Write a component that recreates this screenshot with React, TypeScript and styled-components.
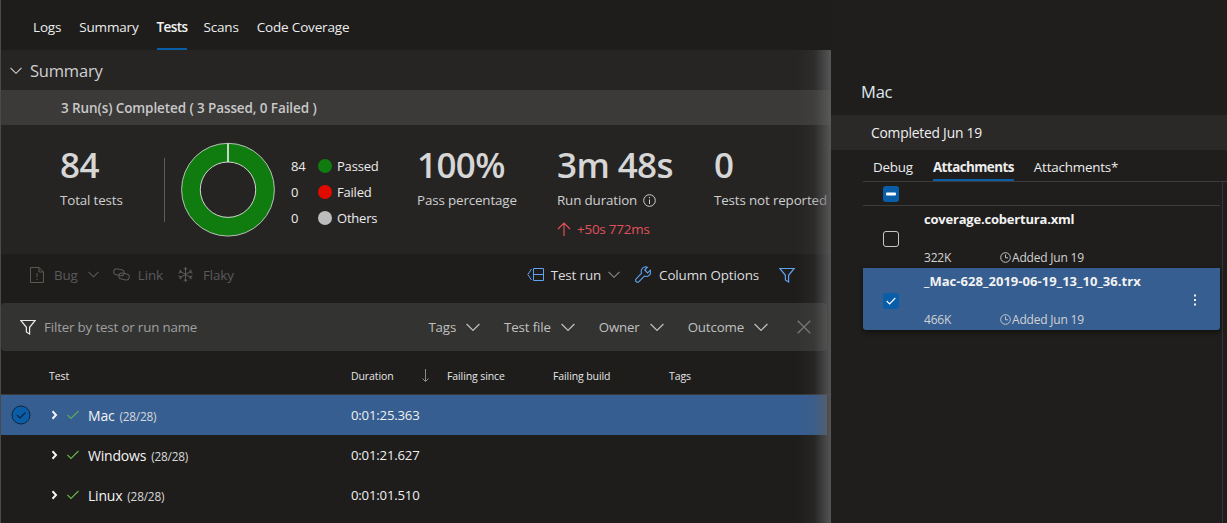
import React from 'react';
import styled, { createGlobalStyle } from 'styled-components';

const Global = createGlobalStyle`
  html, body {
    margin: 0;
    padding: 0;
    background: #1e1d1c;
    overflow: hidden;
  }
  * { box-sizing: border-box; }
`;

const Page = styled.div`
  display: flex;
  width: 1227px;
  height: 523px;
  overflow: hidden;
  background: #1e1d1c;
  font-family: 'Open Sans', 'Noto Sans', sans-serif;
  font-size: 13px;
  letter-spacing: -0.2px;
  color: #f0f0f0;
  border-left: 1px solid #4a4a4a;
`;

const Left = styled.div`
  position: relative;
  width: 830px;
  flex: none;
  display: flex;
  flex-direction: column;
`;

const Shade = styled.div`
  position: absolute;
  top: 50px;
  right: 0;
  bottom: 0;
  width: 34px;
  background: linear-gradient(to right, rgba(90, 90, 90, 0) 0%, rgba(90, 90, 90, 0.14) 50%, rgba(95, 95, 95, 0.85) 100%);
  pointer-events: none;
`;

const Tabs = styled.div`
  height: 50px;
  flex: none;
  display: flex;
  gap: 18px;
  padding-left: 32px;
  background: #1e1d1c;
`;

const Tab = styled.div<{ $active?: boolean }>`
  height: 50px;
  line-height: 54px;
  margin-right: ${({ $active }) => ($active ? '-2px' : '0')};
  font-size: 13.5px;
  font-weight: ${({ $active }) => ($active ? 600 : 400)};
  letter-spacing: ${({ $active }) => ($active ? '-0.6px' : '-0.17px')};
  color: ${({ $active }) => ($active ? '#f2f2f2' : '#ededed')};
  border-bottom: 2px solid ${({ $active }) => ($active ? '#0a5ea8' : 'transparent')};
`;

const SummaryHead = styled.div`
  height: 40px;
  flex: none;
  display: flex;
  align-items: center;
  gap: 8px;
  padding: 1px 0 0 9px;
  background: #262524;
  font-size: 16.5px;
  color: #d0d0d0;
`;

const Band = styled.div`
  height: 35px;
  flex: none;
  display: flex;
  align-items: center;
  padding-left: 60px;
  background: #3b3a39;
  font-size: 13.5px;
  letter-spacing: -0.1px;
  font-weight: 600;
  color: #c8c8c8;
`;

const Stats = styled.div`
  height: 129px;
  flex: none;
  display: flex;
  background: #252423;
  padding: 18px 0 0 59px;
`;

const Stat = styled.div<{ $w: number }>`
  width: ${({ $w }) => $w}px;
  flex: none;
`;

const BigNum = styled.div`
  font-size: 35px;
  line-height: 44px;
  font-weight: 600;
  color: #d6d6d6;
  letter-spacing: -0.6px;
`;

const StatLabel = styled.div`
  margin-top: 3px;
  display: flex;
  align-items: center;
  gap: 6px;
  font-size: 13.4px;
  letter-spacing: -0.15px;
  line-height: 20px;
  color: #cfcfcf;
  white-space: nowrap;
`;

const Delta = styled.div`
  margin-top: 10px;
  display: flex;
  align-items: center;
  gap: 6px;
  font-size: 13.4px;
  line-height: 18px;
  color: #e0525a;
`;

const Divider = styled.div`
  width: 1px;
  height: 64px;
  flex: none;
  margin: 15px 15px 0 0;
  background: #5c5c5c;
`;

const Donut = styled.svg`
  flex: none;
  width: 96px;
  height: 96px;
  margin: -1px 15px 0 0;
`;

const Legend = styled.div`
  width: 126px;
  flex: none;
  display: grid;
  grid-template-columns: 27px 19px auto;
  grid-auto-rows: 26px;
  align-items: center;
  justify-content: start;
  padding-top: 10px;
  font-size: 13px;
  color: #ececec;
`;

const Dot = styled.span<{ $color: string }>`
  width: 14px;
  height: 14px;
  border-radius: 50%;
  background: ${({ $color }) => $color};
`;

const Toolbar = styled.div`
  height: 49px;
  flex: none;
  display: flex;
  align-items: center;
  padding: 0 36px 8px 29px;
  background: #1e1d1c;
`;

const ToolItem = styled.div<{ $dim?: boolean; $gap: number; $mr?: number }>`
  display: flex;
  align-items: center;
  gap: ${({ $gap }) => $gap}px;
  margin-right: ${({ $mr }) => $mr ?? 0}px;
  color: ${({ $dim }) => ($dim ? '#5a5a5a' : '#dcdcdc')};
  font-size: 13.4px;
  letter-spacing: -0.12px;
`;

const Spacer = styled.div`
  flex: 1;
`;

const FilterBar = styled.div`
  height: 48px;
  width: 826px;
  flex: none;
  display: flex;
  align-items: center;
  padding: 0 16px 0 19px;
  background: #333332;
  border-radius: 4px;
  color: #b4b4b4;
  font-size: 13.3px;
  letter-spacing: -0.15px;
`;

const FilterHint = styled.div`
  margin-left: 8px;
  flex: 1;
  color: #a0a0a0;
`;

const FilterDrop = styled.div`
  display: flex;
  align-items: center;
  gap: 10px;
  margin-right: 24px;
  color: #c0c0c0;
`;

const CloseSlot = styled.div`
  margin-left: 5px;
`;

const HeaderRow = styled.div`
  height: 44px;
  flex: none;
  display: grid;
  grid-template-columns: 302px 71px 25px 106px 116px 1fr;
  align-items: center;
  padding: 6px 0 0 48px;
  border-bottom: 1px solid #3a3a3a;
  font-size: 10.5px;
  letter-spacing: -0.1px;
  color: #e6e6e6;
`;

const HeadCell = styled.div`
  white-space: nowrap;
`;

const Row = styled.div<{ $selected?: boolean }>`
  height: 40px;
  width: 826px;
  flex: none;
  display: flex;
  align-items: center;
  background: ${({ $selected }) => ($selected ? '#365e91' : 'transparent')};
`;

const SelectSlot = styled.div`
  width: 50px;
  flex: none;
  display: flex;
  align-items: center;
  padding-left: 10px;
`;

const NameCell = styled.div`
  width: 300px;
  flex: none;
  display: flex;
  align-items: center;
  gap: 9px;
`;

const RowLabel = styled.div`
  display: flex;
  align-items: baseline;
  gap: 5px;
`;

const RowName = styled.span`
  font-size: 14px;
  color: #f4f4f4;
`;

const RowCount = styled.span`
  font-size: 11.8px;
  color: #d8d8d8;
`;

const RowDuration = styled.span`
  font-size: 13.2px;
  color: #f0f0f0;
`;

const Right = styled.div`
  flex: 1;
  display: flex;
  flex-direction: column;
  background: #1f1e1d;
`;

const PanelTitle = styled.div`
  height: 115px;
  flex: none;
  padding: 80px 0 0 30px;
  font-size: 16.5px;
  line-height: 24px;
  color: #dfe8ee;
`;

const CompletedBand = styled.div`
  height: 35px;
  flex: none;
  display: flex;
  align-items: center;
  padding-left: 40px;
  background: #2a2928;
  font-size: 13.8px;
  color: #f0f0f0;
`;

const TabStrip = styled.div`
  height: 32px;
  flex: none;
  margin-left: 32px;
  display: flex;
  gap: 20px;
  padding-left: 10px;
  border-bottom: 1px solid #3c3c3c;
`;

const PanelTab = styled.div<{ $active?: boolean }>`
  height: 31px;
  line-height: 35px;
  font-size: 13.4px;
  font-weight: ${({ $active }) => ($active ? 700 : 400)};
  letter-spacing: ${({ $active }) => ($active ? '-0.55px' : '-0.2px')};
  color: #ededed;
  border-bottom: 2px solid ${({ $active }) => ($active ? '#0a5ea8' : 'transparent')};
`;

const ListArea = styled.div`
  flex: 1;
  margin-left: 32px;
  width: 360px;
  padding-right: 2px;
  border-right: 1px solid #363636;
  display: flex;
  flex-direction: column;
`;

const ListHead = styled.div`
  height: 24px;
  flex: none;
  display: flex;
  align-items: center;
  padding: 1px 0 0 20px;
  border-bottom: 1px solid #3c3c3c;
`;

const Check = styled.div<{ $on?: boolean }>`
  width: 16px;
  height: 16px;
  flex: none;
  display: flex;
  align-items: center;
  justify-content: center;
  border-radius: 3px;
  background: ${({ $on }) => ($on ? '#0a5ea8' : 'transparent')};
  border: ${({ $on }) => ($on ? 'none' : '1px solid #c8c8c8')};
`;

const FileRow = styled.div<{ $selected?: boolean }>`
  height: 62px;
  flex: none;
  display: grid;
  grid-template-columns: 61px 76px 1fr 27px;
  grid-template-rows: 20px 1fr 18px;
  align-items: center;
  padding: 3px 0 2px 0;
  background: ${({ $selected }) => ($selected ? '#365e91' : 'transparent')};
  border-radius: ${({ $selected }) => ($selected ? '0 0 3px 3px' : '0')};
  box-shadow: ${({ $selected }) => ($selected ? '0 2px 5px rgba(0,0,0,0.5)' : 'none')};
`;

const FileCheck = styled.div`
  grid-row: 1 / 4;
  grid-column: 1;
  padding-left: 20px;
  padding-top: 2px;
`;

const FileName = styled.div<{ $selected?: boolean }>`
  grid-row: 1;
  grid-column: 2 / 4;
  font-size: 13px;
  font-weight: 700;
  letter-spacing: ${({ $selected }) => ($selected ? '0.05px' : '-0.2px')};
  color: #f2f2f2;
  white-space: nowrap;
`;

const FileMeta = styled.div<{ $col: string }>`
  grid-row: 3;
  grid-column: ${({ $col }) => $col};
  font-size: 12px;
  color: #d2d2d2;
  display: flex;
  align-items: center;
  gap: 1px;
  white-space: nowrap;
`;

const More = styled.div`
  grid-row: 1 / 4;
  grid-column: 4;
`;

const Stroke = ({ children, w, h, vb, c, sw = 1 }: any) => (
  <svg width={w} height={h} viewBox={vb} fill="none" stroke={c} strokeWidth={sw} style={{ flex: 'none', display: 'block' }}>
    {children}
  </svg>
);

const Chevron = ({ w = 12, c = '#bdbdbd', sw = 1.1 }: any) => (
  <Stroke w={w} h={w * 0.6} vb="0 0 12 7" c={c} sw={sw}>
    <path d="M0.5 0.8 L6 6.2 L11.5 0.8" />
  </Stroke>
);

const Funnel = ({ c, size = 16 }: any) => (
  <Stroke w={size} h={size} vb="0 0 16 16" c={c} sw={1.2}>
    <path d="M0.8 1.5 H15.2 L9.6 8.3 V15 L6.4 13 V8.3 Z" />
  </Stroke>
);

const Tick = ({ c }: any) => (
  <Stroke w={12} h={10} vb="0 0 12 10" c={c} sw={1.1}>
    <path d="M0.5 5 L4 8.5 L11.5 1" />
  </Stroke>
);

const Caret = () => (
  <Stroke w={7} h={10} vb="0 0 7 10" c="#f4f4f4" sw={2}>
    <path d="M1.5 1.2 L5 5 L1.5 8.8" />
  </Stroke>
);

const MiniCheck = ({ c = '#ffffff' }: any) => (
  <Stroke w={10} h={8} vb="0 0 10 8" c={c} sw={1.1}>
    <path d="M0.7 4 L3.6 7 L9.3 1" />
  </Stroke>
);

const Clock = () => (
  <Stroke w={11} h={11} vb="0 0 11 11" c="#d2d2d2" sw={0.9}>
    <circle cx="5.5" cy="5.5" r="4.8" />
    <path d="M5.5 2.5 V5.8 H8" />
  </Stroke>
);

const rows = [
  { name: 'Mac', time: '0:01:25.363', selected: true },
  { name: 'Windows', time: '0:01:21.627' },
  { name: 'Linux', time: '0:01:01.510' },
];

const files = [
  { name: 'coverage.cobertura.xml', size: '322K' },
  { name: '_Mac-628_2019-06-19_13_10_36.trx', size: '466K', selected: true },
];

const legend = [
  { n: '84', label: 'Passed', color: '#107c10' },
  { n: '0', label: 'Failed', color: '#e00b00' },
  { n: '0', label: 'Others', color: '#bdbdbd' },
];

const App = () => {
  return (
    <Page>
      <Global />
      <Left>
        <Tabs>
          <Tab>Logs</Tab>
          <Tab>Summary</Tab>
          <Tab $active>Tests</Tab>
          <Tab>Scans</Tab>
          <Tab>Code Coverage</Tab>
        </Tabs>
        <SummaryHead>
          <Chevron w={12} c="#d0d0d0" />
          Summary
        </SummaryHead>
        <Band>3 Run(s) Completed ( 3 Passed, 0 Failed )</Band>
        <Stats>
          <Stat $w={104}>
            <BigNum>84</BigNum>
            <StatLabel>Total tests</StatLabel>
          </Stat>
          <Divider />
          <Donut viewBox="0 0 96 96">
            <circle cx="48" cy="47.7" r="37" fill="none" stroke="#107c10" strokeWidth="18.8" />
            <circle cx="48" cy="47.7" r="46.4" fill="none" stroke="#c8c8c8" strokeWidth="0.9" />
            <circle cx="48" cy="47.7" r="27.7" fill="none" stroke="#e4e4e4" strokeWidth="0.9" />
            <path d="M48 1.5 V20" stroke="#f0f0f0" strokeWidth="1.6" />
          </Donut>
          <Legend>
            {legend.map((l) => (
              <React.Fragment key={l.label}>
                <span>{l.n}</span>
                <Dot $color={l.color} />
                <span>{l.label}</span>
              </React.Fragment>
            ))}
          </Legend>
          <Stat $w={140}>
            <BigNum>100%</BigNum>
            <StatLabel>Pass percentage</StatLabel>
          </Stat>
          <Stat $w={157}>
            <BigNum>3m 48s</BigNum>
            <StatLabel>
              Run duration
              <Stroke w={13} h={13} vb="0 0 13 13" c="#cfcfcf">
                <circle cx="6.5" cy="6.5" r="5.8" />
                <path d="M6.5 5.5 V10 M6.5 3 V4.2" />
              </Stroke>
            </StatLabel>
            <Delta>
              <Stroke w={14} h={14} vb="0 0 14 14" c="#e0525a" sw={1.2}>
                <path d="M7 14 V1 M1 7 L7 1 L13 7" />
              </Stroke>
              +50s 772ms
            </Delta>
          </Stat>
          <Stat $w={120}>
            <BigNum>0</BigNum>
            <StatLabel>Tests not reported</StatLabel>
          </Stat>
        </Stats>
        <Toolbar>
          <ToolItem $dim $gap={10} $mr={14}>
            <Stroke w={14} h={16} vb="0 0 14 16" c="#565c4e">
              <path d="M0.5 0.5 H9 L13.5 5 V15.5 H0.5 Z M9 0.5 V5 H13.5 M7 6 V10 M7 11.5 V13" />
            </Stroke>
            Bug
            <Chevron w={11} c="#5a5a5a" />
          </ToolItem>
          <ToolItem $dim $gap={8} $mr={15}>
            <Stroke w={17} h={13} vb="0 0 17 13" c="#5a5a5a">
              <rect x="0.7" y="1.3" width="10.5" height="6" rx="3" transform="rotate(12 6 4.3)" />
              <rect x="5.8" y="5.5" width="10.5" height="6" rx="3" transform="rotate(12 11 8.5)" />
            </Stroke>
            Link
          </ToolItem>
          <ToolItem $dim $gap={10}>
            <Stroke w={15} h={15} vb="0 0 15 15" c="#5a5a5a">
              <path d="M7.5 0 V15 M1 3.7 L14 11.3 M1 11.3 L14 3.7 M5.8 1 L7.5 3 L9.2 1 M5.8 14 L7.5 12 L9.2 14 M0.5 6 L3.2 5.4 L2.5 2.8 M14.5 6 L11.8 5.4 L12.5 2.8 M0.5 9 L3.2 9.6 L2.5 12.2 M14.5 9 L11.8 9.6 L12.5 12.2" />
            </Stroke>
            Flaky
          </ToolItem>
          <Spacer />
          <ToolItem $gap={7} $mr={15}>
            <Stroke w={17} h={13} vb="0 0 17 13" c="#5ea2f0">
              <path d="M6.5 0.5 H16.5 V12.5 H6.5 Z M6.5 6.5 H16.5 M4.5 1 L0.8 6.5 L4.5 12" />
            </Stroke>
            Test run
            <Chevron w={12} c="#8a8a8a" />
          </ToolItem>
          <ToolItem $gap={8} $mr={20}>
            <Stroke w={16} h={17} vb="0 0 16 17" c="#5ea2f0" sw={1.1}>
              <path d="M10.5 0.8 A4.6 4.6 0 0 0 6.6 7.2 L1 13 A2 2 0 0 0 3.8 15.8 L9.3 10.1 A4.6 4.6 0 0 0 15.4 4.2 L12.6 7 L9.7 4 L12.4 1.2 A4.6 4.6 0 0 0 10.5 0.8 Z" />
            </Stroke>
            Column Options
          </ToolItem>
          <Funnel c="#5ea2f0" />
        </Toolbar>
        <FilterBar>
          <Funnel c="#e8e8e8" />
          <FilterHint>Filter by test or run name</FilterHint>
          {['Tags', 'Test file', 'Owner', 'Outcome'].map((f) => (
            <FilterDrop key={f}>
              {f}
              <Chevron w={14} c="#c0c0c0" />
            </FilterDrop>
          ))}
          <CloseSlot>
            <Stroke w={14} h={14} vb="0 0 14 14" c="#7a7a7a" sw={1.3}>
              <path d="M0.7 0.7 L13.3 13.3 M13.3 0.7 L0.7 13.3" />
            </Stroke>
          </CloseSlot>
        </FilterBar>
        <HeaderRow>
          <HeadCell>Test</HeadCell>
          <HeadCell>Duration</HeadCell>
          <Stroke w={7} h={13} vb="0 0 7 13" c="#8a8a8a">
            <path d="M3.5 0 V12.5 M0.5 9.5 L3.5 12.5 L6.5 9.5" />
          </Stroke>
          <HeadCell>Failing since</HeadCell>
          <HeadCell>Failing build</HeadCell>
          <HeadCell>Tags</HeadCell>
        </HeaderRow>
        {rows.map((r) => (
          <Row key={r.name} $selected={r.selected}>
            <SelectSlot>
              {r.selected && (
                <svg width="20" height="20" viewBox="0 0 20 20" style={{ display: 'block' }}>
                  <circle cx="10" cy="10" r="9" fill="#0a5ea8" stroke="#10243c" strokeWidth="1" />
                  <path d="M6 10 L9 13 L14.5 7.5" fill="none" stroke="#10243c" strokeWidth="1.2" />
                </svg>
              )}
            </SelectSlot>
            <NameCell>
              <Caret />
              <Tick c={r.selected ? '#5dab5d' : '#67b84a'} />
              <RowLabel>
                <RowName>{r.name}</RowName>
                <RowCount>(28/28)</RowCount>
              </RowLabel>
            </NameCell>
            <RowDuration>{r.time}</RowDuration>
          </Row>
        ))}
        <Shade />
      </Left>
      <Right>
        <PanelTitle>Mac</PanelTitle>
        <CompletedBand>Completed Jun 19</CompletedBand>
        <TabStrip>
          <PanelTab>Debug</PanelTab>
          <PanelTab $active>Attachments</PanelTab>
          <PanelTab>Attachments*</PanelTab>
        </TabStrip>
        <ListArea>
          <ListHead>
            <Check $on>
              <svg width="10" height="4" viewBox="0 0 10 4" style={{ display: 'block' }}>
                <rect x="0" y="0.5" width="10" height="3" rx="1" fill="#fff" />
              </svg>
            </Check>
          </ListHead>
          {files.map((f) => (
            <FileRow key={f.name} $selected={f.selected}>
              <FileCheck>
                <Check $on={f.selected}>{f.selected && <MiniCheck />}</Check>
              </FileCheck>
              <FileName $selected={f.selected}>{f.name}</FileName>
              <FileMeta $col="2">{f.size}</FileMeta>
              <FileMeta $col="3 / 5">
                <Clock />
                Added Jun 19
              </FileMeta>
              {f.selected && (
                <More>
                  <svg width="4" height="12" viewBox="0 0 4 12" style={{ display: 'block' }}>
                    <rect x="1" y="0.5" width="2" height="2" fill="#f0f0f0" />
                    <rect x="1" y="5" width="2" height="2" fill="#f0f0f0" />
                    <rect x="1" y="9.5" width="2" height="2" fill="#f0f0f0" />
                  </svg>
                </More>
              )}
            </FileRow>
          ))}
        </ListArea>
      </Right>
    </Page>
  );
};

export default App;
